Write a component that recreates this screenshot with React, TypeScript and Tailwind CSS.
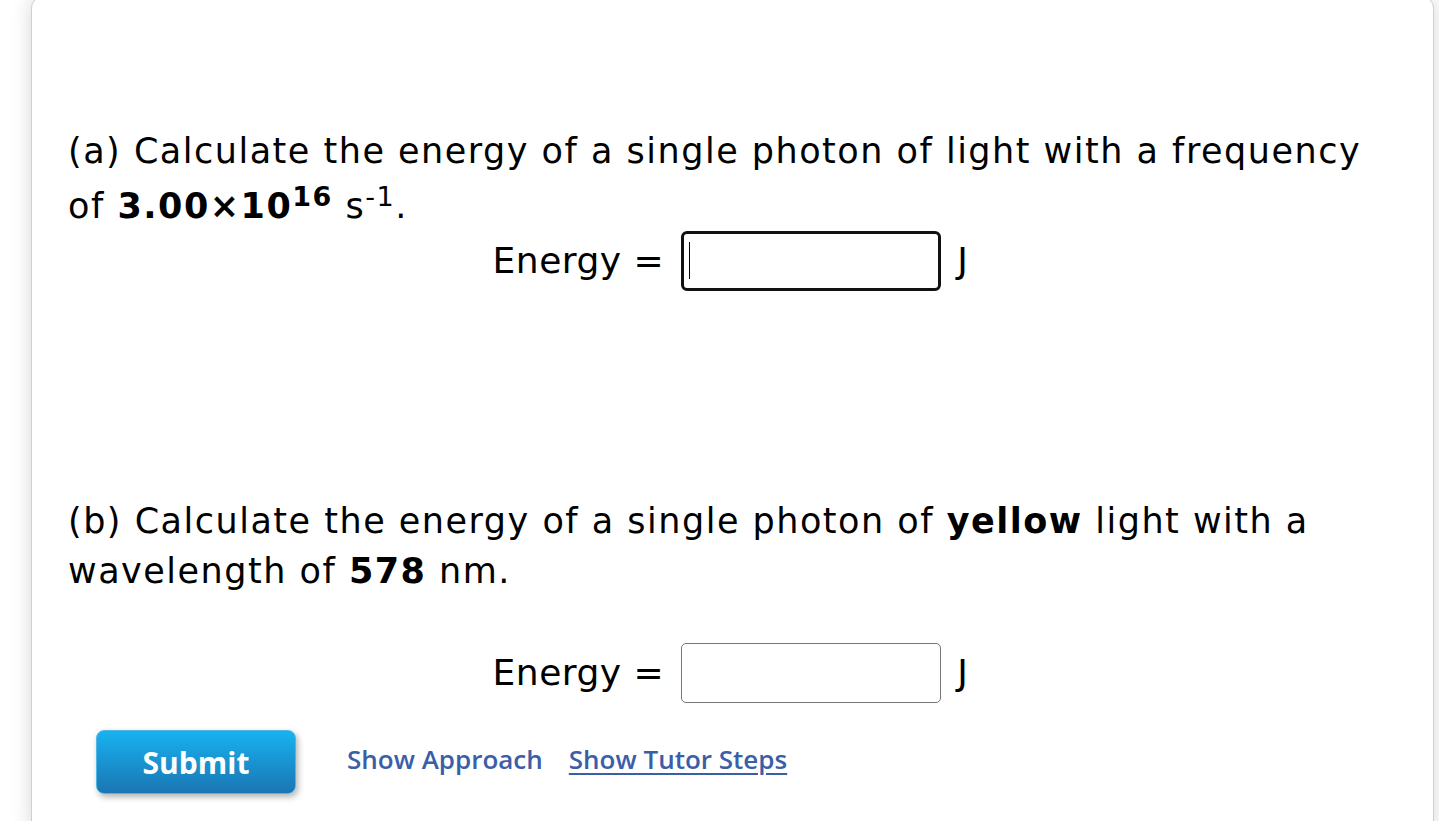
import React from "react";

function AnswerRow({ focused }: { focused?: boolean }) {
  return (
    <div className="flex items-center justify-center text-[36px] leading-none tracking-[0.5px]">
      <span>Energy =</span>
      <div className="relative ml-[17px]">
        <input
          type="text"
          aria-label="Energy"
          className={
            focused
              ? "block h-[60px] w-[260px] rounded-[6px] border-[3px] border-[#111] bg-white outline-none"
              : "block h-[60px] w-[260px] rounded-[5px] border border-[#767676] bg-white outline-none"
          }
        />
        {focused && (
          <span className="absolute left-[8px] top-[11px] h-[37px] w-px bg-black" />
        )}
      </div>
      <span className="ml-[16px]">J</span>
    </div>
  );
}

export default function App() {
  return (
    <div className="min-h-screen overflow-hidden bg-white">
      <div
        className="-mt-[4px] ml-[31px] mr-[5px] rounded-[12px] border border-[#cfcfcf] bg-white pl-[36px] pr-[40px] pt-[129px] pb-[40px] text-black shadow-[0_0_20px_rgba(0,0,0,0.16)]"
        style={{ fontFamily: '"DejaVu Sans", Verdana, sans-serif' }}
      >
        <p className="text-[35px] leading-[50px] tracking-[1.5px]">
          (a) Calculate the energy of a single photon of light with a frequency of{" "}
          <b>
            3.00×10
            <sup className="static inline-block align-[12px] text-[27px] leading-[41px]">16</sup>
          </b>{" "}
          s
          <sup className="static inline-block align-[12px] text-[27px] leading-[41px]">-1</sup>.
        </p>

        <AnswerRow focused />

        <p className="mt-[205px] text-[35px] leading-[50px] tracking-[1.5px]">
          (b) Calculate the energy of a single photon of <b>yellow</b> light with a wavelength of{" "}
          <b>578</b> nm.
        </p>

        <div className="mt-[47px]">
          <AnswerRow />
        </div>

        <div
          className="mt-[27px] flex items-start"
          style={{ fontFamily: '"Open Sans", sans-serif' }}
        >
          <button
            type="button"
            className="ml-[28px] h-[64px] w-[200px] rounded-[8px] border border-[#4fb6e6] bg-gradient-to-b from-[#16b3f0] to-[#1976b3] text-[30px] font-bold text-white shadow-[2px_3px_6px_rgba(0,0,0,0.3)]"
          >
            Submit
          </button>
          <a
            href="#"
            className="ml-[51px] mt-[16px] text-[26px] font-semibold leading-none text-[#3a5ea8]"
          >
            Show Approach
          </a>
          <a
            href="#"
            className="ml-[26px] mt-[16px] text-[26px] font-semibold leading-none text-[#3a5ea8] underline underline-offset-[4px]"
          >
            Show Tutor Steps
          </a>
        </div>
      </div>
    </div>
  );
}
